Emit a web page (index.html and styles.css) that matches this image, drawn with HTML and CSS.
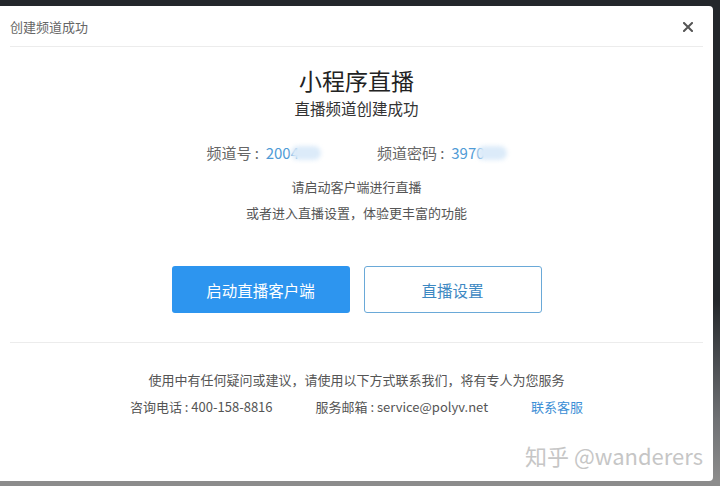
FILE: index.html
```html
<!DOCTYPE html>
<html lang="zh-CN">
<head>
<meta charset="utf-8">
<title>创建频道成功</title>
<link rel="stylesheet" href="styles.css">
</head>
<body>
<div class="screen">
  <div class="dialog">
    <div class="dialog-header">
      <span class="dialog-title">创建频道成功</span>
      <button class="close" aria-label="关闭">
        <svg width="10" height="10" viewBox="0 0 10 10"><path d="M1 1L9 9M9 1L1 9" stroke="#555" stroke-width="2" stroke-linecap="square"/></svg>
      </button>
    </div>
    <div class="rule"></div>
    <div class="dialog-body">
      <h1 class="app-name">小程序直播</h1>
      <p class="subtitle">直播频道创建成功</p>
      <div class="channel-info">
        <div class="info-item"><span class="label">频道号&nbsp;:&nbsp;&nbsp;</span><span class="value">2004</span><span class="mask"></span></div>
        <div class="info-item"><span class="label">频道密码&nbsp;:&nbsp;&nbsp;</span><span class="value">3970</span><span class="mask"></span></div>
      </div>
      <div class="hints">
        <p class="hint">请启动客户端进行直播</p>
        <p class="hint">或者进入直播设置，体验更丰富的功能</p>
      </div>
      <div class="actions">
        <button class="btn btn-primary">启动直播客户端</button>
        <button class="btn btn-outline">直播设置</button>
      </div>
    </div>
    <div class="rule"></div>
    <div class="dialog-footer">
      <p class="support">使用中有任何疑问或建议，请使用以下方式联系我们，将有专人为您服务</p>
      <div class="contacts">
        <span>咨询电话&nbsp;:&nbsp;400-158-8816</span>
        <span>服务邮箱&nbsp;:&nbsp;service@polyv.net</span>
        <a class="link" href="#">联系客服</a>
      </div>
    </div>
    <div class="watermark">知乎 @wanderers</div>
  </div>
</div>
</body>
</html>
```
FILE: styles.css
```css
html, body {
  margin: 0;
  padding: 0;
}

body {
  font-family: "Noto Sans CJK SC", "Noto Sans", sans-serif;
  background: #23272b;
}

.screen {
  width: 720px;
  height: 486px;
  box-sizing: border-box;
  padding: 6px 7px 5px 0;
  background: linear-gradient(to bottom, #23272b 0, #23272b 300px, #6f7174 420px, #8c8c8c 480px);
  overflow: hidden;
}

.dialog {
  position: relative;
  height: 100%;
  background: #fff;
  border-radius: 0 4px 4px 0;
  display: flex;
  flex-direction: column;
}

.dialog-header {
  height: 40px;
  display: flex;
  align-items: center;
  justify-content: space-between;
  padding: 0 20px 0 10px;
}

.dialog-title {
  font-size: 13px;
  color: #666;
}

.close {
  border: 0;
  background: none;
  padding: 0;
  width: 10px;
  height: 10px;
  display: flex;
  margin-top: 2px;
}

.rule {
  height: 1px;
  margin: 0 10px;
  background: #ececec;
}

.dialog-body {
  display: flex;
  flex-direction: column;
  align-items: center;
}

.app-name {
  margin: 17px 0 0;
  font-size: 23px;
  font-weight: 400;
  line-height: 32px;
  color: #222;
}

.subtitle {
  margin: 1px 0 0;
  font-size: 15.5px;
  line-height: 22px;
  color: #333;
}

.channel-info {
  margin-top: 22px;
  display: flex;
  gap: 56px;
  line-height: 24px;
  font-size: 15px;
}

.info-item {
  display: flex;
  align-items: center;
}

.label {
  color: #666;
}

.value {
  color: #4f9bd6;
}

.mask {
  display: inline-block;
  width: 30px;
  height: 14px;
  margin-left: -8px;
  border-radius: 7px;
  background: #dcebf9;
  filter: blur(2px);
}

.hints {
  margin-top: 9px;
  display: flex;
  flex-direction: column;
  align-items: center;
}

.hint {
  margin: 0;
  font-size: 13px;
  line-height: 26px;
  color: #555;
}

.actions {
  margin-top: 40px;
  margin-bottom: 29px;
  display: flex;
  gap: 14px;
}

.btn {
  width: 178px;
  height: 47px;
  border-radius: 3px;
  font-family: inherit;
  font-size: 15.5px;
  cursor: pointer;
}

.btn-primary {
  border: 0;
  background: #2d95ef;
  color: #fff;
}

.btn-outline {
  border: 1px solid #6aa9d8;
  background: #fff;
  color: #3c88c2;
}

.dialog-footer {
  display: flex;
  flex-direction: column;
  align-items: center;
  padding-top: 24px;
  font-size: 13px;
  line-height: 26px;
  color: #555;
}

.support {
  margin: 0;
}

.contacts {
  margin-top: 1px;
  display: flex;
  gap: 43px;
}

.link {
  color: #3d8fd6;
  text-decoration: none;
}

.watermark {
  position: absolute;
  right: 10px;
  bottom: 12px;
  font-family: "Noto Sans CJK SC", "Liberation Sans", sans-serif;
  font-size: 22px;
  line-height: 28px;
  color: #c6c6c6;
}
```
